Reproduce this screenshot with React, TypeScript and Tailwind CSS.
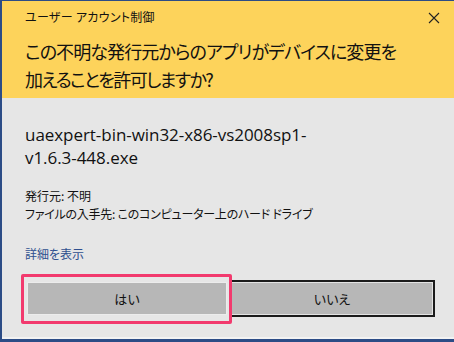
export default function App() {
  const jp = "font-['Noto_Sans_CJK_JP','Noto_Sans',sans-serif] [font-feature-settings:'palt']";
  return (
    <div className="w-[454px] h-[342px] overflow-hidden bg-[#e6e6e6]">
      <div className="relative w-full h-full border-l-2 border-t border-b-[3px] border-[#2c4c86] flex flex-col">
        {/* header */}
        <div className={`h-[97px] shrink-0 bg-[#fdd35b] pl-[23px] pt-[8px] text-[#111] ${jp}`}>
          <div className="flex items-center justify-between pr-[14px]">
            <span className="text-[12px] leading-[16px] tracking-[0.3px]">ユーザー アカウント制御</span>
            <svg width="12" height="12" viewBox="0 0 12 12" className="mt-[2px]">
              <path d="M1 1L11 11M11 1L1 11" stroke="#222" strokeWidth="1.1" />
            </svg>
          </div>
          <div className="mt-[12px] text-[18px] leading-[28px] whitespace-nowrap">
            <div className="tracking-[-0.9px]">この不明な発行元からのアプリがデバイスに変更を</div>
            <div className="tracking-[-1.6px]">加えることを許可しますか?</div>
          </div>
        </div>

        {/* body */}
        <div className="flex-1 pl-[23px] text-[#111]">
          <div className="pt-[25px] font-['Open_Sans',sans-serif] text-[17px] leading-[23px] tracking-[-0.05px]">
            uaexpert-bin-win32-x86-vs2008sp1-
            <br />
            v1.6.3-448.exe
          </div>
          <div className={`mt-[18px] text-[12px] leading-[18px] ${jp}`}>
            <div>発行元: 不明</div>
            <div className="tracking-[-0.25px]">ファイルの入手先: このコンピューター上のハード ドライブ</div>
          </div>
          <div className={`mt-[22px] text-[12px] leading-[18px] text-[#2f4f8f] ${jp}`}>詳細を表示</div>

          <div className={`mt-[17px] flex text-[13px] ${jp}`}>
            <button className="w-[204px] h-[37px] border-2 border-[#e6e6e6] bg-[#b7b7b7] shadow-[inset_0_0_0_1px_#ececec] text-[#111]">
              はい
            </button>
            <button className="w-[206px] h-[37px] border-2 border-[#1b1b1b] bg-[#b7b7b7] shadow-[inset_0_0_0_1px_#e3e3e3] text-[#111]">
              いいえ
            </button>
          </div>
        </div>
        <div className="h-[2px] shrink-0 bg-[#f2f2f2]" />

        {/* highlight annotation */}
        <div className="absolute left-[19px] top-[273px] w-[211px] h-[50px] border-[3px] border-[#f23a6e] rounded-[2px]" />
      </div>
    </div>
  );
}
